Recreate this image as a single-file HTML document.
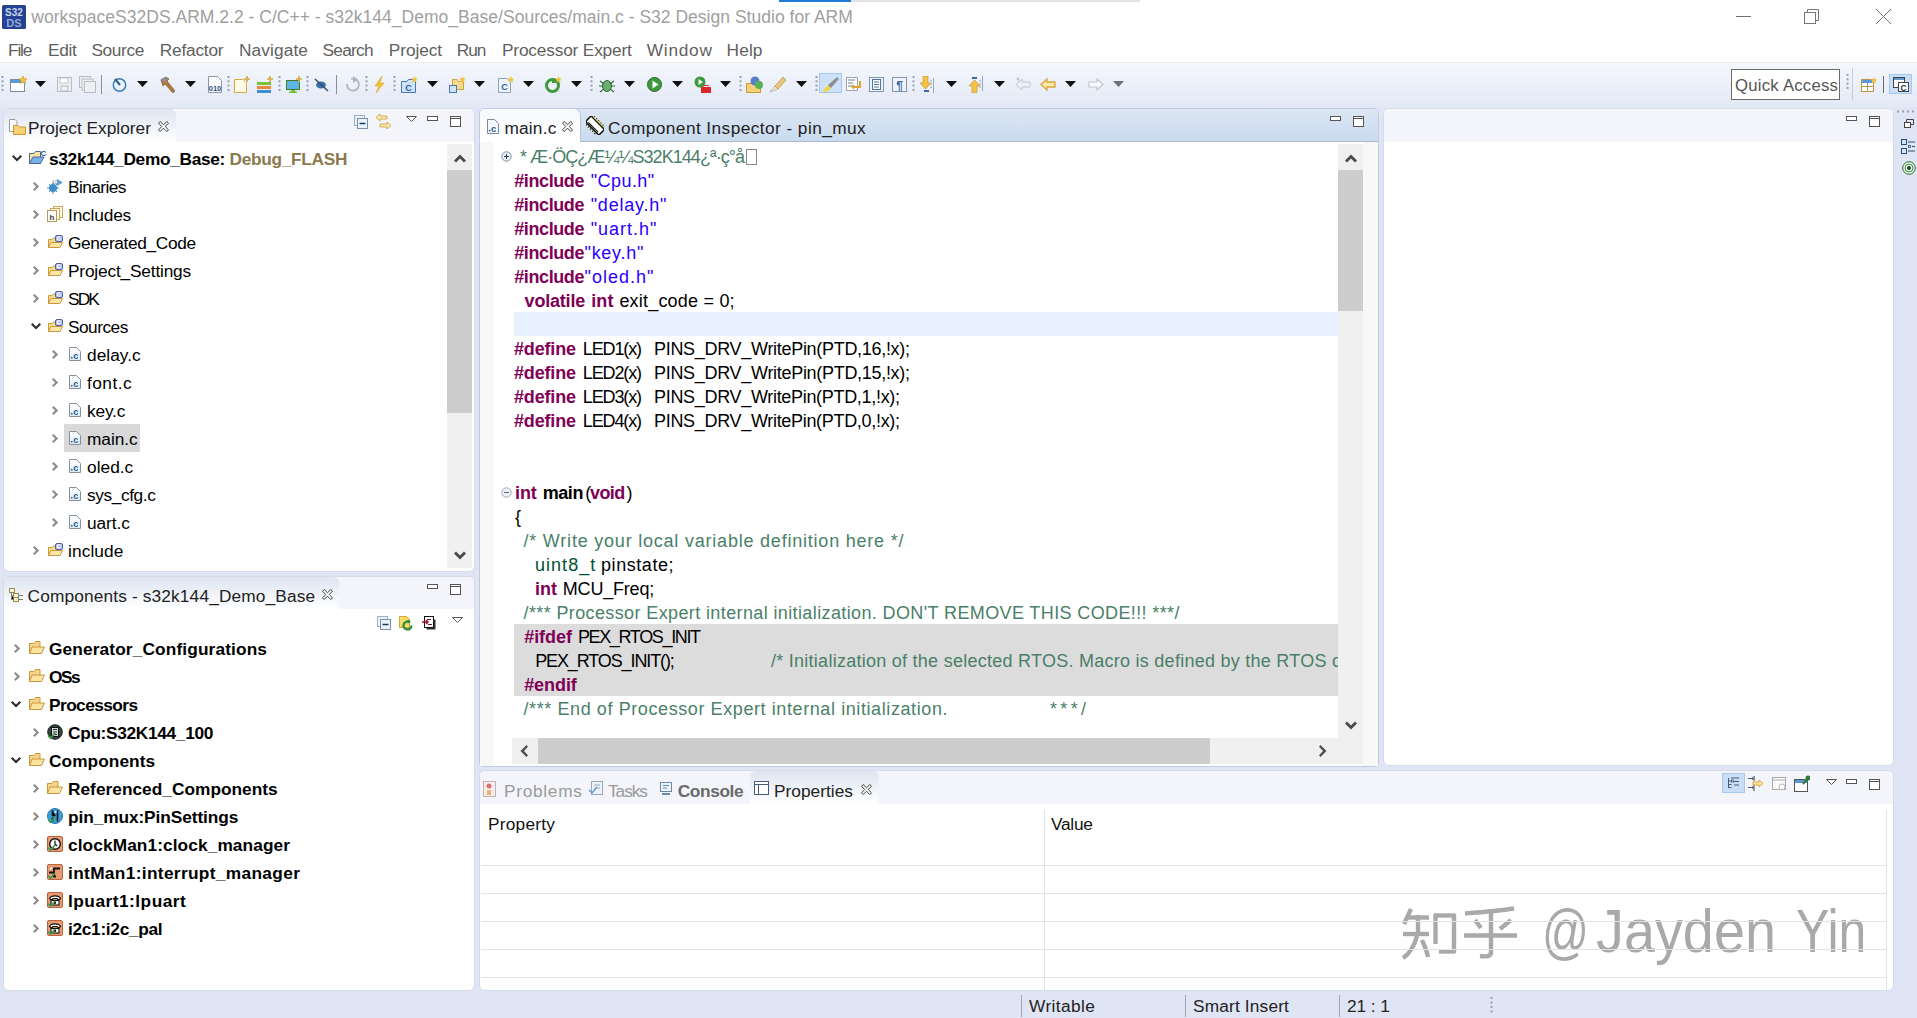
<!DOCTYPE html><html><head><meta charset="utf-8"><style>
html,body{margin:0;padding:0}
body{width:1917px;height:1018px;overflow:hidden;position:relative;background:#dfe5f4;font-family:"Liberation Sans",sans-serif}
.t{position:absolute;white-space:pre;line-height:1.117;}
.i{position:absolute}
</style></head><body>
<div style="position:absolute;left:0px;top:0px;width:1917px;height:62px;background:#fff"></div>
<div style="position:absolute;left:779px;top:0px;width:72px;height:2px;background:#1f7ad8"></div>
<div style="position:absolute;left:851px;top:0px;width:289px;height:2px;background:#e3e3e3"></div>
<svg class="i" style="left:2px;top:5px" width="24" height="24" viewBox="0 0 24 24"><rect x="0" y="0" width="24" height="24" rx="1.5" fill="#24428f"/><text x="12" y="10.5" font-size="10" font-weight="bold" text-anchor="middle" fill="#c9d6f0" font-family="Liberation Sans">S32</text><text x="12" y="21.5" font-size="11" font-weight="bold" text-anchor="middle" fill="#8fa9dc" font-family="Liberation Sans">DS</text></svg>
<div class="t" style="left:31.3px;top:8.43px;font-size:17.5px;color:#a0a0a0;letter-spacing:0.017px;">workspaceS32DS.ARM.2.2 - C/C++ - s32k144_Demo_Base/Sources/main.c - S32 Design Studio for ARM</div>
<div style="position:absolute;left:1736px;top:16px;width:15px;height:1px;background:#707070"></div>
<svg class="i" style="left:1804px;top:9px" width="16" height="16"><rect x="0.5" y="3.5" width="11" height="11" fill="none" stroke="#777"/><path d="M3.5 3.5V0.5H14.5V11.5H11.5" fill="none" stroke="#777"/></svg>
<svg class="i" style="left:1876px;top:9px" width="15" height="15"><path d="M0 0L15 15M15 0L0 15" stroke="#707070" stroke-width="1"/></svg>
<div class="t" style="left:8px;top:40.54px;font-size:17.3px;color:#5f5f5f;letter-spacing:-1.159px;">File</div>
<div class="t" style="left:48px;top:40.54px;font-size:17.3px;color:#5f5f5f;letter-spacing:-0.337px;">Edit</div>
<div class="t" style="left:91.4px;top:40.54px;font-size:17.3px;color:#5f5f5f;letter-spacing:-0.363px;">Source</div>
<div class="t" style="left:159.7px;top:40.54px;font-size:17.3px;color:#5f5f5f;letter-spacing:-0.197px;">Refactor</div>
<div class="t" style="left:239px;top:40.54px;font-size:17.3px;color:#5f5f5f;letter-spacing:0.103px;">Navigate</div>
<div class="t" style="left:322.5px;top:40.54px;font-size:17.3px;color:#5f5f5f;letter-spacing:-0.723px;">Search</div>
<div class="t" style="left:388.8px;top:40.54px;font-size:17.3px;color:#5f5f5f;letter-spacing:-0.074px;">Project</div>
<div class="t" style="left:456.8px;top:40.54px;font-size:17.3px;color:#5f5f5f;letter-spacing:-1.018px;">Run</div>
<div class="t" style="left:502px;top:40.54px;font-size:17.3px;color:#5f5f5f;letter-spacing:-0.179px;">Processor Expert</div>
<div class="t" style="left:646.8px;top:40.54px;font-size:17.3px;color:#5f5f5f;letter-spacing:0.734px;">Window</div>
<div class="t" style="left:726.6px;top:40.54px;font-size:17.3px;color:#5f5f5f;letter-spacing:0.107px;">Help</div>
<div style="position:absolute;left:0px;top:62px;width:1917px;height:1px;background:#ececec"></div>
<div style="position:absolute;left:0px;top:63px;width:1917px;height:45px;background:linear-gradient(#f4f7fc,#e3e8f6)"></div>
<svg class="i" style="left:1px;top:76px;" width="3" height="17" viewBox="0 0 3 17"><rect x="0.5" y="0.0" width="2" height="2" fill="#9aa0aa"/><rect x="0.5" y="4.3" width="2" height="2" fill="#9aa0aa"/><rect x="0.5" y="8.6" width="2" height="2" fill="#9aa0aa"/><rect x="0.5" y="12.9" width="2" height="2" fill="#9aa0aa"/></svg>
<svg class="i" style="left:10px;top:76px;" width="17" height="17" viewBox="0 0 17 17"><rect x="0.5" y="3.5" width="14" height="12" fill="#fff" stroke="#7a8ca8"/><rect x="1" y="4" width="13" height="3" fill="#5b9bd5"/><path d="M13 0l1.2 2.6 2.8.3-2.1 1.9.6 2.8L13 6.2 10.5 7.6l.6-2.8L9 2.9l2.8-.3z" fill="#f5c342" stroke="#b98a1a" stroke-width=".5"/></svg>
<svg class="i" style="left:35px;top:81px;" width="11" height="6" viewBox="0 0 11 6"><path d="M0 0H11L5.5 6Z" fill="#111"/></svg>
<svg class="i" style="left:57px;top:77px;" width="16" height="16" viewBox="0 0 16 16"><rect x="0.5" y="0.5" width="14" height="14" fill="#eef0f3" stroke="#b9bcc2"/><rect x="3" y="1" width="8" height="5" fill="#fff" stroke="#b9bcc2" stroke-width=".8"/><rect x="4" y="9" width="7" height="5" fill="none" stroke="#b9bcc2"/></svg>
<svg class="i" style="left:79px;top:76px;" width="17" height="17" viewBox="0 0 17 17"><rect x="0.5" y="0.5" width="11" height="11" fill="#eef0f3" stroke="#b9bcc2"/><rect x="3" y="3" width="11" height="11" fill="#eef0f3" stroke="#b9bcc2"/><rect x="5.5" y="5.5" width="11" height="11" fill="#eef0f3" stroke="#b9bcc2"/></svg>
<div style="position:absolute;left:101px;top:75px;width:1px;height:19px;background:#8a8f98"></div>
<svg class="i" style="left:112px;top:77px;" width="15" height="15" viewBox="0 0 15 15"><circle cx="7.5" cy="8" r="6.2" fill="#eaf3fb" stroke="#3d7fb6" stroke-width="1.5"/><path d="M3 2l5 6" stroke="#2f5f8a" stroke-width="2"/></svg>
<svg class="i" style="left:137px;top:81px;" width="11" height="6" viewBox="0 0 11 6"><path d="M0 0H11L5.5 6Z" fill="#111"/></svg>
<svg class="i" style="left:159px;top:76px;" width="17" height="17" viewBox="0 0 17 17"><path d="M2 4l5-3 3 2-2 2 8 10-2 2-8-9-2 2z" fill="#b07a3c" stroke="#6d4a24" stroke-width=".6"/><path d="M1 4l5-3 3 2-3 3z" fill="#8a8f99"/></svg>
<svg class="i" style="left:185px;top:81px;" width="11" height="6" viewBox="0 0 11 6"><path d="M0 0H11L5.5 6Z" fill="#111"/></svg>
<svg class="i" style="left:208px;top:76px;" width="14" height="17" viewBox="0 0 14 17"><path d="M0.5 0.5H9.5L13.5 4.5V16.5H0.5Z" fill="#fff" stroke="#8a96a8"/><text x="7" y="15" font-size="7.5" font-weight="bold" text-anchor="middle" fill="#2c4f7c" font-family="Liberation Sans">010</text></svg>
<svg class="i" style="left:227px;top:76px;" width="3" height="17" viewBox="0 0 3 17"><rect x="0.5" y="0.0" width="2" height="2" fill="#9aa0aa"/><rect x="0.5" y="4.3" width="2" height="2" fill="#9aa0aa"/><rect x="0.5" y="8.6" width="2" height="2" fill="#9aa0aa"/><rect x="0.5" y="12.9" width="2" height="2" fill="#9aa0aa"/></svg>
<svg class="i" style="left:234px;top:76px;" width="17" height="17" viewBox="0 0 17 17"><path d="M0.5 3.5H9L12.5 7V16.5H0.5Z" fill="#fffbe6" stroke="#d7a93f"/><path d="M13 0v6M10 3h6" stroke="#d7a93f" stroke-width="1.6"/></svg>
<svg class="i" style="left:257px;top:76px;" width="17" height="17" viewBox="0 0 17 17"><rect x="0" y="6" width="14" height="3" fill="#7cbf3a"/><rect x="0" y="10" width="14" height="3" fill="#e98a3b"/><rect x="0" y="14" width="14" height="3" fill="#3d8fd1"/><path d="M13 0v6M10 3h6" stroke="#d7a93f" stroke-width="1.6"/></svg>
<svg class="i" style="left:278px;top:76px;" width="3" height="17" viewBox="0 0 3 17"><rect x="0.5" y="0.0" width="2" height="2" fill="#9aa0aa"/><rect x="0.5" y="4.3" width="2" height="2" fill="#9aa0aa"/><rect x="0.5" y="8.6" width="2" height="2" fill="#9aa0aa"/><rect x="0.5" y="12.9" width="2" height="2" fill="#9aa0aa"/></svg>
<svg class="i" style="left:286px;top:76px;" width="17" height="17" viewBox="0 0 17 17"><rect x="0.5" y="4.5" width="13" height="9" fill="#5fb4e6" stroke="#3f7c22"/><rect x="5" y="14" width="4" height="2" fill="#7cbf3a"/><rect x="3" y="15.5" width="8" height="1.5" fill="#7cbf3a"/><path d="M13 0v6M10 3h6" stroke="#d7a93f" stroke-width="1.6"/></svg>
<svg class="i" style="left:306px;top:76px;" width="3" height="17" viewBox="0 0 3 17"><rect x="0.5" y="0.0" width="2" height="2" fill="#9aa0aa"/><rect x="0.5" y="4.3" width="2" height="2" fill="#9aa0aa"/><rect x="0.5" y="8.6" width="2" height="2" fill="#9aa0aa"/><rect x="0.5" y="12.9" width="2" height="2" fill="#9aa0aa"/></svg>
<svg class="i" style="left:314px;top:77px;" width="15" height="15" viewBox="0 0 15 15"><ellipse cx="7" cy="8" rx="5" ry="3.5" fill="#3d6fa5"/><path d="M1 2l13 12" stroke="#2f4f7a" stroke-width="1.5"/></svg>
<div style="position:absolute;left:336px;top:75px;width:1px;height:19px;background:#8a8f98"></div>
<svg class="i" style="left:344px;top:76px;" width="17" height="17" viewBox="0 0 17 17"><path d="M3 8a6 6 0 1 0 4-5" fill="none" stroke="#b0b4bb" stroke-width="1.8"/><path d="M9 0v7l5-3.5z" fill="#b0b4bb"/></svg>
<svg class="i" style="left:365px;top:76px;" width="3" height="17" viewBox="0 0 3 17"><rect x="0.5" y="0.0" width="2" height="2" fill="#9aa0aa"/><rect x="0.5" y="4.3" width="2" height="2" fill="#9aa0aa"/><rect x="0.5" y="8.6" width="2" height="2" fill="#9aa0aa"/><rect x="0.5" y="12.9" width="2" height="2" fill="#9aa0aa"/></svg>
<svg class="i" style="left:374px;top:76px;" width="12" height="17" viewBox="0 0 12 17"><path d="M8 0L1 10h4l-3 7 8-10H6z" fill="#f4c42f" stroke="#caa018" stroke-width=".5"/></svg>
<svg class="i" style="left:393px;top:76px;" width="3" height="17" viewBox="0 0 3 17"><rect x="0.5" y="0.0" width="2" height="2" fill="#9aa0aa"/><rect x="0.5" y="4.3" width="2" height="2" fill="#9aa0aa"/><rect x="0.5" y="8.6" width="2" height="2" fill="#9aa0aa"/><rect x="0.5" y="12.9" width="2" height="2" fill="#9aa0aa"/></svg>
<svg class="i" style="left:401px;top:76px;" width="17" height="17" viewBox="0 0 17 17"><path d="M0.5 5.5H6l1.5-2H14.5V16.5H0.5Z" fill="#cfe2f7" stroke="#4a78b5"/><text x="7.5" y="15" font-size="9" font-weight="bold" text-anchor="middle" fill="#2d5fa5" font-family="Liberation Sans">C</text><path d="M13.5 0l1 2.2 2.4.3-1.8 1.6.5 2.4-2.1-1.2-2.1 1.2.5-2.4-1.8-1.6 2.4-.3z" fill="#f5c342"/></svg>
<svg class="i" style="left:427px;top:81px;" width="11" height="6" viewBox="0 0 11 6"><path d="M0 0H11L5.5 6Z" fill="#111"/></svg>
<svg class="i" style="left:449px;top:76px;" width="17" height="17" viewBox="0 0 17 17"><path d="M3.5 3.5H8l1.5 2H14.5V13.5H3.5Z" fill="#f7d98a" stroke="#c9a247"/><rect x="0.5" y="9.5" width="7" height="7" fill="#cfe2f7" stroke="#4a78b5"/><path d="M13.5 0l1 2.2 2.4.3-1.8 1.6.5 2.4-2.1-1.2-2.1 1.2.5-2.4-1.8-1.6 2.4-.3z" fill="#f5c342"/></svg>
<svg class="i" style="left:474px;top:81px;" width="11" height="6" viewBox="0 0 11 6"><path d="M0 0H11L5.5 6Z" fill="#111"/></svg>
<svg class="i" style="left:498px;top:76px;" width="16" height="17" viewBox="0 0 16 17"><path d="M0.5 2.5H9L12.5 6V16.5H0.5Z" fill="#eef4fb" stroke="#8fa2bb"/><text x="6.5" y="14" font-size="9" font-weight="bold" text-anchor="middle" fill="#2d5fa5" font-family="Liberation Sans">C</text><path d="M13 0l1 2.2 2.4.3-1.8 1.6.5 2.4-2.1-1.2-2.1 1.2.5-2.4-1.8-1.6 2.4-.3z" fill="#f5c342"/></svg>
<svg class="i" style="left:523px;top:81px;" width="11" height="6" viewBox="0 0 11 6"><path d="M0 0H11L5.5 6Z" fill="#111"/></svg>
<svg class="i" style="left:545px;top:76px;" width="17" height="17" viewBox="0 0 17 17"><circle cx="7.5" cy="9.5" r="6" fill="none" stroke="#3f9a3a" stroke-width="3"/><path d="M7 6h6v4" fill="none" stroke="#3f9a3a" stroke-width="2"/><path d="M13.5 0l1 2.2 2.4.3-1.8 1.6.5 2.4-2.1-1.2-2.1 1.2.5-2.4-1.8-1.6 2.4-.3z" fill="#f5c342"/></svg>
<svg class="i" style="left:571px;top:81px;" width="11" height="6" viewBox="0 0 11 6"><path d="M0 0H11L5.5 6Z" fill="#111"/></svg>
<svg class="i" style="left:590px;top:76px;" width="3" height="17" viewBox="0 0 3 17"><rect x="0.5" y="0.0" width="2" height="2" fill="#9aa0aa"/><rect x="0.5" y="4.3" width="2" height="2" fill="#9aa0aa"/><rect x="0.5" y="8.6" width="2" height="2" fill="#9aa0aa"/><rect x="0.5" y="12.9" width="2" height="2" fill="#9aa0aa"/></svg>
<svg class="i" style="left:599px;top:76px;" width="16" height="17" viewBox="0 0 16 17"><ellipse cx="8" cy="10" rx="4.5" ry="5.5" fill="#6ab06a" stroke="#2f6e3a"/><path d="M1 5l4 3M15 5l-4 3M0 10h4M12 10h4M1 16l4-3M15 16l-4-3" stroke="#2f6e3a" stroke-width="1.2"/></svg>
<svg class="i" style="left:624px;top:81px;" width="11" height="6" viewBox="0 0 11 6"><path d="M0 0H11L5.5 6Z" fill="#111"/></svg>
<svg class="i" style="left:647px;top:77px;" width="15" height="15" viewBox="0 0 15 15"><circle cx="7.5" cy="7.5" r="7" fill="#3c9a3c" stroke="#2a6f2a"/><path d="M5.5 3.5v8l6-4z" fill="#fff"/></svg>
<svg class="i" style="left:672px;top:81px;" width="11" height="6" viewBox="0 0 11 6"><path d="M0 0H11L5.5 6Z" fill="#111"/></svg>
<svg class="i" style="left:694px;top:76px;" width="17" height="17" viewBox="0 0 17 17"><circle cx="6" cy="6" r="5.5" fill="#3c9a3c"/><path d="M4.5 3v6l4.5-3z" fill="#fff"/><rect x="7" y="11" width="10" height="6" fill="#d9262b"/><rect x="10" y="9.5" width="4" height="2" fill="none" stroke="#d9262b"/></svg>
<svg class="i" style="left:720px;top:81px;" width="11" height="6" viewBox="0 0 11 6"><path d="M0 0H11L5.5 6Z" fill="#111"/></svg>
<svg class="i" style="left:739px;top:76px;" width="3" height="17" viewBox="0 0 3 17"><rect x="0.5" y="0.0" width="2" height="2" fill="#9aa0aa"/><rect x="0.5" y="4.3" width="2" height="2" fill="#9aa0aa"/><rect x="0.5" y="8.6" width="2" height="2" fill="#9aa0aa"/><rect x="0.5" y="12.9" width="2" height="2" fill="#9aa0aa"/></svg>
<svg class="i" style="left:746px;top:76px;" width="18" height="17" viewBox="0 0 18 17"><path d="M0.5 7.5H6l1.5-2H14.5V16.5H0.5Z" fill="#f7d07a" stroke="#c9973a"/><circle cx="9" cy="5" r="4.5" fill="#5a7fc9"/><circle cx="13" cy="9" r="4" fill="#58b058"/></svg>
<svg class="i" style="left:769px;top:76px;" width="18" height="17" viewBox="0 0 18 17"><path d="M1 16l5-6 3 3z" fill="#f1e6c8" stroke="#999" stroke-width=".6"/><path d="M6 10l8-9 3 3-8 9z" fill="#e7c67c" stroke="#b08a3a" stroke-width=".6"/></svg>
<svg class="i" style="left:796px;top:81px;" width="11" height="6" viewBox="0 0 11 6"><path d="M0 0H11L5.5 6Z" fill="#111"/></svg>
<svg class="i" style="left:815px;top:76px;" width="3" height="17" viewBox="0 0 3 17"><rect x="0.5" y="0.0" width="2" height="2" fill="#9aa0aa"/><rect x="0.5" y="4.3" width="2" height="2" fill="#9aa0aa"/><rect x="0.5" y="8.6" width="2" height="2" fill="#9aa0aa"/><rect x="0.5" y="12.9" width="2" height="2" fill="#9aa0aa"/></svg>
<div style="position:absolute;left:819px;top:73px;width:23px;height:20px;background:#cde1f9;border:1px solid #a6c7ee;box-sizing:border-box"></div>
<svg class="i" style="left:822px;top:76px;" width="17" height="17" viewBox="0 0 17 17"><path d="M1 16c2 0 6-1 8-4l-3-3c-2 2-4 5-5 7z" fill="#f5d23c"/><path d="M6 9l9-8 2 2-8 9z" fill="#8e8e8e"/></svg>
<svg class="i" style="left:846px;top:76px;" width="16" height="17" viewBox="0 0 16 17"><rect x="0.5" y="1.5" width="11" height="13" fill="#fff" stroke="#9aa6b5"/><path d="M2 4h7M2 7h5M2 10h5" stroke="#6f7f95"/><path d="M14 5v6H8" fill="none" stroke="#e0a530" stroke-width="2"/><path d="M8 8v6l-3-3z" fill="#e0a530"/></svg>
<svg class="i" style="left:869px;top:77px;" width="15" height="15" viewBox="0 0 15 15"><rect x="0.5" y="0.5" width="14" height="14" fill="#eef3fa" stroke="#8496ad"/><rect x="3.5" y="2.5" width="8" height="10" fill="#fff" stroke="#4d73a8"/><path d="M5 5h5M5 7.5h5M5 10h5" stroke="#4d73a8"/></svg>
<svg class="i" style="left:892px;top:77px;" width="15" height="15" viewBox="0 0 15 15"><rect x="0.5" y="0.5" width="14" height="14" fill="#eef3fa" stroke="#8496ad"/><text x="7.5" y="12.5" font-size="12" font-weight="bold" text-anchor="middle" fill="#3d6aa5" font-family="Liberation Sans">¶</text></svg>
<svg class="i" style="left:912px;top:76px;" width="3" height="17" viewBox="0 0 3 17"><rect x="0.5" y="0.0" width="2" height="2" fill="#9aa0aa"/><rect x="0.5" y="4.3" width="2" height="2" fill="#9aa0aa"/><rect x="0.5" y="8.6" width="2" height="2" fill="#9aa0aa"/><rect x="0.5" y="12.9" width="2" height="2" fill="#9aa0aa"/></svg>
<svg class="i" style="left:919px;top:76px;" width="16" height="17" viewBox="0 0 16 17"><path d="M4 0h5v7h3l-5.5 6L1 7h3z" fill="#f5c342" stroke="#c9973a" stroke-width=".7"/><path d="M14.5 2v15M11 5h2M11 8h2M11 11h2" stroke="#9aa6b5"/><rect x="5" y="14" width="5" height="2" fill="#3d6aa5"/></svg>
<svg class="i" style="left:946px;top:81px;" width="11" height="6" viewBox="0 0 11 6"><path d="M0 0H11L5.5 6Z" fill="#111"/></svg>
<svg class="i" style="left:968px;top:76px;" width="16" height="17" viewBox="0 0 16 17"><path d="M4 17h5v-7h3L6.5 4 1 10h3z" fill="#f5c342" stroke="#c9973a" stroke-width=".7"/><path d="M14.5 0v15M11 5h2M11 8h2M11 11h2" stroke="#9aa6b5"/><rect x="4" y="1" width="5" height="2" fill="#3d6aa5"/></svg>
<svg class="i" style="left:994px;top:81px;" width="11" height="6" viewBox="0 0 11 6"><path d="M0 0H11L5.5 6Z" fill="#111"/></svg>
<svg class="i" style="left:1015px;top:77px;" width="16" height="15" viewBox="0 0 16 15"><path d="M1 7.5L7 2v3h8v5H7v3z" fill="#eceff3" stroke="#c2c6cc"/><circle cx="3" cy="2" r="1.5" fill="#c2c6cc"/></svg>
<svg class="i" style="left:1040px;top:77px;" width="16" height="15" viewBox="0 0 16 15"><path d="M1 7.5L7 2v3h8v5H7v3z" fill="#fde9a8" stroke="#d9a53a" stroke-width="1.3"/></svg>
<svg class="i" style="left:1065px;top:81px;" width="11" height="6" viewBox="0 0 11 6"><path d="M0 0H11L5.5 6Z" fill="#111"/></svg>
<svg class="i" style="left:1088px;top:77px;" width="16" height="15" viewBox="0 0 16 15"><path d="M15 7.5L9 2v3H1v5h8v3z" fill="#fafbfc" stroke="#c2c6cc" stroke-width="1.2"/></svg>
<svg class="i" style="left:1113px;top:81px;" width="11" height="6" viewBox="0 0 11 6"><path d="M0 0H11L5.5 6Z" fill="#6d7079"/></svg>
<div style="position:absolute;left:1731px;top:69px;width:109px;height:31px;background:#fff;border:1px solid #6b6b6b;box-sizing:border-box"></div>
<div class="t" style="left:1735px;top:77.07px;font-size:16.7px;color:#555;letter-spacing:0.252px;">Quick Access</div>
<svg class="i" style="left:1846px;top:74px;" width="3" height="17" viewBox="0 0 3 17"><rect x="0.5" y="0.0" width="2" height="2" fill="#9aa0aa"/><rect x="0.5" y="4.3" width="2" height="2" fill="#9aa0aa"/><rect x="0.5" y="8.6" width="2" height="2" fill="#9aa0aa"/><rect x="0.5" y="12.9" width="2" height="2" fill="#9aa0aa"/></svg>
<div style="position:absolute;left:1852px;top:68px;width:1px;height:32px;background:#c6ccd6"></div>
<svg class="i" style="left:1861px;top:77px;" width="17" height="15" viewBox="0 0 17 15"><rect x="0.5" y="2.5" width="12" height="12" fill="#fff" stroke="#b8954a"/><rect x="1" y="3" width="11" height="3" fill="#5b9bd5"/><path d="M1 9.5h11M6.5 6v9" stroke="#b8954a"/><path d="M13 0l1 2.2 2.4.3-1.8 1.6.5 2.4-2.1-1.2-2.1 1.2.5-2.4-1.8-1.6 2.4-.3z" fill="#f5c342"/></svg>
<div style="position:absolute;left:1883px;top:76px;width:1px;height:17px;background:#6b6b6b"></div>
<div style="position:absolute;left:1889px;top:74px;width:23px;height:20px;background:#c9def7;border:1px solid #a9c8ef;box-sizing:border-box"></div>
<svg class="i" style="left:1893px;top:77px;" width="16" height="15" viewBox="0 0 16 15"><rect x="0.5" y="0.5" width="11" height="10" fill="#fff" stroke="#444"/><rect x="1" y="1" width="10" height="2" fill="#5b9bd5"/><rect x="5.5" y="5.5" width="10" height="9" fill="#fff" stroke="#444"/><text x="10.5" y="13.5" font-size="8.5" font-weight="bold" text-anchor="middle" fill="#234" font-family="Liberation Sans">C</text></svg>
<div style="position:absolute;left:3px;top:108px;width:472px;height:464px;background:#fff;border:1px solid #d5dbe9;box-sizing:border-box;border-radius:6px"></div>
<div style="position:absolute;left:4px;top:109px;width:470px;height:33px;background:#f4f5fa;border-radius:5px 5px 0 0"></div>
<div style="position:absolute;left:4px;top:109px;width:172px;height:33px;background:linear-gradient(#dde5f1,#ffffff);border-radius:5px 6px 0 0"></div>
<svg class="i" style="left:9px;top:119px;" width="17" height="16" viewBox="0 0 17 16"><path d="M0.5 0.5H6L8 2.5V12.5H0.5Z" fill="#fff" stroke="#9a9a9a"/><path d="M4.5 6.5H9l1.5 1.5H16.5V15.5H4.5Z" fill="#f7d274" stroke="#c9973a"/></svg>
<div class="t" style="left:28px;top:118.54px;font-size:17.3px;color:#222;">Project Explorer</div>
<svg class="i" style="left:158px;top:121px;" width="11" height="11" viewBox="0 0 11 11"><path d="M2.2 0.5L5.5 3.8L8.8 0.5L10.5 2.2L7.2 5.5L10.5 8.8L8.8 10.5L5.5 7.2L2.2 10.5L0.5 8.8L3.8 5.5L0.5 2.2Z" fill="#fff" stroke="#3c3c3c" stroke-width="1"/></svg>
<svg class="i" style="left:354px;top:115px;" width="14" height="14" viewBox="0 0 14 14"><rect x="0.5" y="0.5" width="10" height="10" fill="#e8f3fb" stroke="#9fb0c4"/><rect x="3.5" y="3.5" width="10" height="10" fill="#e8f3fb" stroke="#7d8fa6"/><path d="M5.5 8.5h6" stroke="#1e3a5f" stroke-width="1.5"/></svg>
<svg class="i" style="left:375px;top:113px;" width="17" height="17" viewBox="0 0 17 17"><path d="M1 4.5L5 1v2h7v3H5v2z" fill="#fbe8a6" stroke="#c9a042" stroke-width=".8"/><path d="M16 12.5L12 9v2H5v3h7v2z" fill="#fbe8a6" stroke="#c9a042" stroke-width=".8"/></svg>
<svg class="i" style="left:406px;top:116px;" width="11" height="6" viewBox="0 0 11 6"><path d="M0.5 0.5H10.5L5.5 5.5Z" fill="#fff" stroke="#555"/></svg>
<svg class="i" style="left:427px;top:116px;" width="11" height="5" viewBox="0 0 11 5"><rect x="0.5" y="0.5" width="10" height="4" fill="#fff" stroke="#555"/></svg>
<svg class="i" style="left:450px;top:116px;" width="11" height="11" viewBox="0 0 11 11"><rect x="0.5" y="0.5" width="10" height="10" fill="#fff" stroke="#555"/><path d="M0.5 2.5h10" stroke="#555"/></svg>
<div style="position:absolute;left:447px;top:144px;width:25px;height:424px;background:#f0f0f0"></div>
<div style="position:absolute;left:447px;top:170px;width:25px;height:243px;background:#cdcdcd"></div>
<svg class="i" style="left:453.5px;top:154px;" width="12" height="9" viewBox="0 0 12 9"><path d="M0 6.5L6 0.5L12 6.5L10 8.5L6 4.5L2 8.5Z" fill="#4a4a4a"/></svg>
<svg class="i" style="left:453.5px;top:551px;" width="12" height="9" viewBox="0 0 12 9"><path d="M0 2.5L6 8.5L12 2.5L10 0.5L6 4.5L2 0.5Z" fill="#4a4a4a"/></svg>
<svg class="i" style="left:12px;top:155.0px;" width="10" height="7" viewBox="0 0 10 7"><path d="M0 1.6L1.5 0L5 3.4L8.5 0L10 1.6L5 6.5Z" fill="#2f2f2f"/></svg>
<svg class="i" style="left:29px;top:149px;" width="18" height="16" viewBox="0 0 18 16"><path d="M0.5 4.5H5l1.5-2H11.5V14.5H0.5Z" fill="#f9dfa8" stroke="#4a6a9a"/><path d="M0.5 14.5L4 8H15L11.5 14.5Z" fill="#78b0e8" stroke="#4a6a9a"/><text x="14.5" y="7" font-size="8" font-weight="bold" text-anchor="middle" fill="#2d4f8a" font-family="Liberation Sans">C</text></svg>
<div class="t" style="left:49px;top:149.64px;font-size:17.3px;color:#000;letter-spacing:-0.310px;"><span style="font-weight:bold;">s32k144_Demo_Base: </span><span style="color:#8a7a4e;font-weight:bold;">Debug_FLASH</span></div>
<svg class="i" style="left:33px;top:182.0px;" width="7" height="9" viewBox="0 0 7 9"><path d="M0 1.5L1.6 0L6.2 4.5L1.6 9L0 7.5L3 4.5Z" fill="#8f8f8f"/></svg>
<svg class="i" style="left:47px;top:178px;" width="17" height="16" viewBox="0 0 17 16"><circle cx="6" cy="10" r="4" fill="#3d8fc9"/><path d="M0 10h12M6 4v12M2 6l8 8M10 6l-8 8" stroke="#3d8fc9" stroke-width="1"/><path d="M10 1v7l6-3.5z" fill="#5aa0d6"/><text x="5" y="6" font-size="5" fill="#888" font-family="Liberation Sans">10</text></svg>
<div class="t" style="left:68px;top:177.64px;font-size:17.3px;color:#000;letter-spacing:-0.586px;">Binaries</div>
<svg class="i" style="left:33px;top:210.0px;" width="7" height="9" viewBox="0 0 7 9"><path d="M0 1.5L1.6 0L6.2 4.5L1.6 9L0 7.5L3 4.5Z" fill="#8f8f8f"/></svg>
<svg class="i" style="left:47px;top:206px;" width="17" height="16" viewBox="0 0 17 16"><rect x="6.5" y="0.5" width="9" height="11" fill="#fff8e6" stroke="#c9a95a"/><rect x="3.5" y="2.5" width="9" height="11" fill="#fff8e6" stroke="#c9a95a"/><rect x="0.5" y="4.5" width="9" height="11" fill="#fff" stroke="#b59a58"/><text x="5" y="14" font-size="8" font-weight="bold" text-anchor="middle" fill="#333" font-family="Liberation Sans">h</text></svg>
<div class="t" style="left:68px;top:205.64px;font-size:17.3px;color:#000;letter-spacing:-0.162px;">Includes</div>
<svg class="i" style="left:33px;top:238.0px;" width="7" height="9" viewBox="0 0 7 9"><path d="M0 1.5L1.6 0L6.2 4.5L1.6 9L0 7.5L3 4.5Z" fill="#8f8f8f"/></svg>
<svg class="i" style="left:48px;top:235px;" width="16" height="14" viewBox="0 0 16 14"><path d="M0.5 4.5H4l1.5-1.5H9V12.5H0.5Z" fill="#f9d88a" stroke="#c9973a"/><path d="M0.5 12.5L3 7.5H14.5L12 12.5Z" fill="#fde7a8" stroke="#c9973a"/><rect x="7.5" y="0.5" width="7" height="6" rx="1.5" fill="#b9c9ee" stroke="#4a5fae"/><path d="M12.5 2.2a1.8 1.8 0 1 0 0 2.6" fill="none" stroke="#fff" stroke-width="1"/></svg>
<div class="t" style="left:68px;top:233.64px;font-size:17.3px;color:#000;letter-spacing:-0.349px;">Generated_Code</div>
<svg class="i" style="left:33px;top:266.0px;" width="7" height="9" viewBox="0 0 7 9"><path d="M0 1.5L1.6 0L6.2 4.5L1.6 9L0 7.5L3 4.5Z" fill="#8f8f8f"/></svg>
<svg class="i" style="left:48px;top:263px;" width="16" height="14" viewBox="0 0 16 14"><path d="M0.5 4.5H4l1.5-1.5H9V12.5H0.5Z" fill="#f9d88a" stroke="#c9973a"/><path d="M0.5 12.5L3 7.5H14.5L12 12.5Z" fill="#fde7a8" stroke="#c9973a"/><rect x="7.5" y="0.5" width="7" height="6" rx="1.5" fill="#b9c9ee" stroke="#4a5fae"/><path d="M12.5 2.2a1.8 1.8 0 1 0 0 2.6" fill="none" stroke="#fff" stroke-width="1"/></svg>
<div class="t" style="left:68px;top:261.64px;font-size:17.3px;color:#000;letter-spacing:-0.178px;">Project_Settings</div>
<svg class="i" style="left:33px;top:294.0px;" width="7" height="9" viewBox="0 0 7 9"><path d="M0 1.5L1.6 0L6.2 4.5L1.6 9L0 7.5L3 4.5Z" fill="#8f8f8f"/></svg>
<svg class="i" style="left:48px;top:291px;" width="16" height="14" viewBox="0 0 16 14"><path d="M0.5 4.5H4l1.5-1.5H9V12.5H0.5Z" fill="#f9d88a" stroke="#c9973a"/><path d="M0.5 12.5L3 7.5H14.5L12 12.5Z" fill="#fde7a8" stroke="#c9973a"/><rect x="7.5" y="0.5" width="7" height="6" rx="1.5" fill="#b9c9ee" stroke="#4a5fae"/><path d="M12.5 2.2a1.8 1.8 0 1 0 0 2.6" fill="none" stroke="#fff" stroke-width="1"/></svg>
<div class="t" style="left:68px;top:289.64px;font-size:17.3px;color:#000;letter-spacing:-1.836px;">SDK</div>
<svg class="i" style="left:31px;top:323.0px;" width="10" height="7" viewBox="0 0 10 7"><path d="M0 1.6L1.5 0L5 3.4L8.5 0L10 1.6L5 6.5Z" fill="#2f2f2f"/></svg>
<svg class="i" style="left:48px;top:319px;" width="16" height="14" viewBox="0 0 16 14"><path d="M0.5 4.5H4l1.5-1.5H9V12.5H0.5Z" fill="#f9d88a" stroke="#c9973a"/><path d="M0.5 12.5L3 7.5H14.5L12 12.5Z" fill="#fde7a8" stroke="#c9973a"/><rect x="7.5" y="0.5" width="7" height="6" rx="1.5" fill="#b9c9ee" stroke="#4a5fae"/><path d="M12.5 2.2a1.8 1.8 0 1 0 0 2.6" fill="none" stroke="#fff" stroke-width="1"/></svg>
<div class="t" style="left:68px;top:317.64px;font-size:17.3px;color:#000;letter-spacing:-0.511px;">Sources</div>
<svg class="i" style="left:52px;top:350.0px;" width="7" height="9" viewBox="0 0 7 9"><path d="M0 1.5L1.6 0L6.2 4.5L1.6 9L0 7.5L3 4.5Z" fill="#8f8f8f"/></svg>
<svg class="i" style="left:69px;top:347px;" width="12" height="14" viewBox="0 0 12 14"><defs><linearGradient id="cfg125" x1="0" y1="0" x2="0" y2="1"><stop offset="0" stop-color="#fff"/><stop offset="1" stop-color="#dcecf8"/></linearGradient></defs><path d="M0.5 0.5H7.5L11.5 4.5V13.5H0.5Z" fill="url(#cfg125)" stroke="#8a8f96"/><text x="6.8" y="11.5" font-size="9" font-weight="bold" text-anchor="middle" fill="#1f5a8f" font-family="Liberation Sans">c</text><rect x="2" y="10" width="1.5" height="1.5" fill="#1f5a8f"/></svg>
<div class="t" style="left:87px;top:345.64px;font-size:17.3px;color:#000;letter-spacing:0.028px;">delay.c</div>
<svg class="i" style="left:52px;top:378.0px;" width="7" height="9" viewBox="0 0 7 9"><path d="M0 1.5L1.6 0L6.2 4.5L1.6 9L0 7.5L3 4.5Z" fill="#8f8f8f"/></svg>
<svg class="i" style="left:69px;top:375px;" width="12" height="14" viewBox="0 0 12 14"><defs><linearGradient id="cfg128" x1="0" y1="0" x2="0" y2="1"><stop offset="0" stop-color="#fff"/><stop offset="1" stop-color="#dcecf8"/></linearGradient></defs><path d="M0.5 0.5H7.5L11.5 4.5V13.5H0.5Z" fill="url(#cfg128)" stroke="#8a8f96"/><text x="6.8" y="11.5" font-size="9" font-weight="bold" text-anchor="middle" fill="#1f5a8f" font-family="Liberation Sans">c</text><rect x="2" y="10" width="1.5" height="1.5" fill="#1f5a8f"/></svg>
<div class="t" style="left:87px;top:373.64px;font-size:17.3px;color:#000;letter-spacing:0.478px;">font.c</div>
<svg class="i" style="left:52px;top:406.0px;" width="7" height="9" viewBox="0 0 7 9"><path d="M0 1.5L1.6 0L6.2 4.5L1.6 9L0 7.5L3 4.5Z" fill="#8f8f8f"/></svg>
<svg class="i" style="left:69px;top:403px;" width="12" height="14" viewBox="0 0 12 14"><defs><linearGradient id="cfg131" x1="0" y1="0" x2="0" y2="1"><stop offset="0" stop-color="#fff"/><stop offset="1" stop-color="#dcecf8"/></linearGradient></defs><path d="M0.5 0.5H7.5L11.5 4.5V13.5H0.5Z" fill="url(#cfg131)" stroke="#8a8f96"/><text x="6.8" y="11.5" font-size="9" font-weight="bold" text-anchor="middle" fill="#1f5a8f" font-family="Liberation Sans">c</text><rect x="2" y="10" width="1.5" height="1.5" fill="#1f5a8f"/></svg>
<div class="t" style="left:87px;top:401.64px;font-size:17.3px;color:#000;letter-spacing:-0.173px;">key.c</div>
<div style="position:absolute;left:64px;top:424px;width:76px;height:28px;background:#d9d9d9"></div>
<svg class="i" style="left:52px;top:434.0px;" width="7" height="9" viewBox="0 0 7 9"><path d="M0 1.5L1.6 0L6.2 4.5L1.6 9L0 7.5L3 4.5Z" fill="#8f8f8f"/></svg>
<svg class="i" style="left:69px;top:431px;" width="12" height="14" viewBox="0 0 12 14"><defs><linearGradient id="cfg135" x1="0" y1="0" x2="0" y2="1"><stop offset="0" stop-color="#fff"/><stop offset="1" stop-color="#dcecf8"/></linearGradient></defs><path d="M0.5 0.5H7.5L11.5 4.5V13.5H0.5Z" fill="url(#cfg135)" stroke="#8a8f96"/><text x="6.8" y="11.5" font-size="9" font-weight="bold" text-anchor="middle" fill="#1f5a8f" font-family="Liberation Sans">c</text><rect x="2" y="10" width="1.5" height="1.5" fill="#1f5a8f"/></svg>
<div class="t" style="left:87px;top:429.64px;font-size:17.3px;color:#000;letter-spacing:-0.031px;">main.c</div>
<svg class="i" style="left:52px;top:462.0px;" width="7" height="9" viewBox="0 0 7 9"><path d="M0 1.5L1.6 0L6.2 4.5L1.6 9L0 7.5L3 4.5Z" fill="#8f8f8f"/></svg>
<svg class="i" style="left:69px;top:459px;" width="12" height="14" viewBox="0 0 12 14"><defs><linearGradient id="cfg138" x1="0" y1="0" x2="0" y2="1"><stop offset="0" stop-color="#fff"/><stop offset="1" stop-color="#dcecf8"/></linearGradient></defs><path d="M0.5 0.5H7.5L11.5 4.5V13.5H0.5Z" fill="url(#cfg138)" stroke="#8a8f96"/><text x="6.8" y="11.5" font-size="9" font-weight="bold" text-anchor="middle" fill="#1f5a8f" font-family="Liberation Sans">c</text><rect x="2" y="10" width="1.5" height="1.5" fill="#1f5a8f"/></svg>
<div class="t" style="left:87px;top:457.64px;font-size:17.3px;color:#000;letter-spacing:0.027px;">oled.c</div>
<svg class="i" style="left:52px;top:490.0px;" width="7" height="9" viewBox="0 0 7 9"><path d="M0 1.5L1.6 0L6.2 4.5L1.6 9L0 7.5L3 4.5Z" fill="#8f8f8f"/></svg>
<svg class="i" style="left:69px;top:487px;" width="12" height="14" viewBox="0 0 12 14"><defs><linearGradient id="cfg141" x1="0" y1="0" x2="0" y2="1"><stop offset="0" stop-color="#fff"/><stop offset="1" stop-color="#dcecf8"/></linearGradient></defs><path d="M0.5 0.5H7.5L11.5 4.5V13.5H0.5Z" fill="url(#cfg141)" stroke="#8a8f96"/><text x="6.8" y="11.5" font-size="9" font-weight="bold" text-anchor="middle" fill="#1f5a8f" font-family="Liberation Sans">c</text><rect x="2" y="10" width="1.5" height="1.5" fill="#1f5a8f"/></svg>
<div class="t" style="left:87px;top:485.64px;font-size:17.3px;color:#000;letter-spacing:-0.401px;">sys_cfg.c</div>
<svg class="i" style="left:52px;top:518.0px;" width="7" height="9" viewBox="0 0 7 9"><path d="M0 1.5L1.6 0L6.2 4.5L1.6 9L0 7.5L3 4.5Z" fill="#8f8f8f"/></svg>
<svg class="i" style="left:69px;top:515px;" width="12" height="14" viewBox="0 0 12 14"><defs><linearGradient id="cfg144" x1="0" y1="0" x2="0" y2="1"><stop offset="0" stop-color="#fff"/><stop offset="1" stop-color="#dcecf8"/></linearGradient></defs><path d="M0.5 0.5H7.5L11.5 4.5V13.5H0.5Z" fill="url(#cfg144)" stroke="#8a8f96"/><text x="6.8" y="11.5" font-size="9" font-weight="bold" text-anchor="middle" fill="#1f5a8f" font-family="Liberation Sans">c</text><rect x="2" y="10" width="1.5" height="1.5" fill="#1f5a8f"/></svg>
<div class="t" style="left:87px;top:513.64px;font-size:17.3px;color:#000;letter-spacing:-0.073px;">uart.c</div>
<svg class="i" style="left:33px;top:546.0px;" width="7" height="9" viewBox="0 0 7 9"><path d="M0 1.5L1.6 0L6.2 4.5L1.6 9L0 7.5L3 4.5Z" fill="#8f8f8f"/></svg>
<svg class="i" style="left:48px;top:543px;" width="16" height="14" viewBox="0 0 16 14"><path d="M0.5 4.5H4l1.5-1.5H9V12.5H0.5Z" fill="#f9d88a" stroke="#c9973a"/><path d="M0.5 12.5L3 7.5H14.5L12 12.5Z" fill="#fde7a8" stroke="#c9973a"/><rect x="7.5" y="0.5" width="7" height="6" rx="1.5" fill="#b9c9ee" stroke="#4a5fae"/><path d="M12.5 2.2a1.8 1.8 0 1 0 0 2.6" fill="none" stroke="#fff" stroke-width="1"/></svg>
<div class="t" style="left:68px;top:541.64px;font-size:17.3px;color:#000;letter-spacing:0.096px;">include</div>
<div style="position:absolute;left:3px;top:576px;width:472px;height:415px;background:#fff;border:1px solid #d5dbe9;box-sizing:border-box;border-radius:6px"></div>
<div style="position:absolute;left:4px;top:577px;width:470px;height:32px;background:#f4f5fa;border-radius:5px 5px 0 0"></div>
<div style="position:absolute;left:4px;top:577px;width:335px;height:32px;background:linear-gradient(#dde5f1,#ffffff);border-radius:5px 6px 0 0"></div>
<svg class="i" style="left:9px;top:588px;" width="17" height="14" viewBox="0 0 17 14"><rect x="0.5" y="0.5" width="5" height="4" fill="#fff3c9" stroke="#9a8a55"/><rect x="4.5" y="5.5" width="5" height="4" fill="#fff3c9" stroke="#9a8a55"/><rect x="4.5" y="9.5" width="5" height="4" fill="#fff3c9" stroke="#9a8a55"/><path d="M2.5 4.5v7h2M10 7.5h4M10 11.5h4" stroke="#7a7a7a"/></svg>
<div class="t" style="left:27.5px;top:586.74px;font-size:17.3px;color:#222;letter-spacing:0.148px;">Components - s32k144_Demo_Base</div>
<svg class="i" style="left:322px;top:589px;" width="11" height="11" viewBox="0 0 11 11"><path d="M2.2 0.5L5.5 3.8L8.8 0.5L10.5 2.2L7.2 5.5L10.5 8.8L8.8 10.5L5.5 7.2L2.2 10.5L0.5 8.8L3.8 5.5L0.5 2.2Z" fill="#fff" stroke="#3c3c3c" stroke-width="1"/></svg>
<svg class="i" style="left:427px;top:584px;" width="11" height="5" viewBox="0 0 11 5"><rect x="0.5" y="0.5" width="10" height="4" fill="#fff" stroke="#555"/></svg>
<svg class="i" style="left:450px;top:584px;" width="11" height="11" viewBox="0 0 11 11"><rect x="0.5" y="0.5" width="10" height="10" fill="#fff" stroke="#555"/><path d="M0.5 2.5h10" stroke="#555"/></svg>
<svg class="i" style="left:377px;top:616px;" width="14" height="14" viewBox="0 0 14 14"><rect x="0.5" y="0.5" width="10" height="10" fill="#e8f3fb" stroke="#9fb0c4"/><rect x="3.5" y="3.5" width="10" height="10" fill="#e8f3fb" stroke="#7d8fa6"/><path d="M5.5 8.5h6" stroke="#1e3a5f" stroke-width="1.5"/></svg>
<svg class="i" style="left:399px;top:616px;" width="15" height="15" viewBox="0 0 15 15"><path d="M0.5 0.5h7l3 3v8h-10z" fill="#f7dc6a" stroke="#d0a830"/><path d="M12.5 9.5a4 4 0 1 1-2-3.5" fill="none" stroke="#2e8a3a" stroke-width="2.2"/><path d="M9 3.5l3 2.5-3.5 1.5z" fill="#2e8a3a"/></svg>
<svg class="i" style="left:422px;top:616px;" width="14" height="14" viewBox="0 0 14 14"><rect x="4.5" y="3.5" width="9" height="10" fill="#333"/><rect x="2.5" y="0.5" width="9" height="11" fill="#fff" stroke="#111"/><path d="M0 6h6M4 4l2 2-2 2" stroke="#a0102a" stroke-width="1.4" fill="none"/><path d="M5 3.5h4M6 8.5h4" stroke="#7a1030"/></svg>
<svg class="i" style="left:452px;top:617px;" width="11" height="6" viewBox="0 0 11 6"><path d="M0.5 0.5H10.5L5.5 5.5Z" fill="#fff" stroke="#555"/></svg>
<svg class="i" style="left:14px;top:644.0px;" width="7" height="9" viewBox="0 0 7 9"><path d="M0 1.5L1.6 0L6.2 4.5L1.6 9L0 7.5L3 4.5Z" fill="#8f8f8f"/></svg>
<svg class="i" style="left:29px;top:640px;" width="17" height="15" viewBox="0 0 17 15"><path d="M0.5 3.5H5l1.5-2H11V13.5H0.5Z" fill="#f6d48a" stroke="#c9973a"/><path d="M0.5 13.5L3 7H15.5L12.5 13.5Z" fill="#fbe3a2" stroke="#c9973a"/></svg>
<div class="t" style="left:49px;top:639.64px;font-size:17.3px;color:#000;font-weight:bold;letter-spacing:0.126px;">Generator_Configurations</div>
<svg class="i" style="left:14px;top:672.0px;" width="7" height="9" viewBox="0 0 7 9"><path d="M0 1.5L1.6 0L6.2 4.5L1.6 9L0 7.5L3 4.5Z" fill="#8f8f8f"/></svg>
<svg class="i" style="left:29px;top:668px;" width="17" height="15" viewBox="0 0 17 15"><path d="M0.5 3.5H5l1.5-2H11V13.5H0.5Z" fill="#f6d48a" stroke="#c9973a"/><path d="M0.5 13.5L3 7H15.5L12.5 13.5Z" fill="#fbe3a2" stroke="#c9973a"/></svg>
<div class="t" style="left:49px;top:667.64px;font-size:17.3px;color:#000;font-weight:bold;letter-spacing:-1.509px;">OSs</div>
<svg class="i" style="left:11px;top:701.0px;" width="10" height="7" viewBox="0 0 10 7"><path d="M0 1.6L1.5 0L5 3.4L8.5 0L10 1.6L5 6.5Z" fill="#2f2f2f"/></svg>
<svg class="i" style="left:29px;top:696px;" width="17" height="15" viewBox="0 0 17 15"><path d="M0.5 3.5H5l1.5-2H11V13.5H0.5Z" fill="#f6d48a" stroke="#c9973a"/><path d="M0.5 13.5L3 7H15.5L12.5 13.5Z" fill="#fbe3a2" stroke="#c9973a"/></svg>
<div class="t" style="left:49px;top:695.64px;font-size:17.3px;color:#000;font-weight:bold;letter-spacing:-0.561px;">Processors</div>
<svg class="i" style="left:33px;top:728.0px;" width="7" height="9" viewBox="0 0 7 9"><path d="M0 1.5L1.6 0L6.2 4.5L1.6 9L0 7.5L3 4.5Z" fill="#8f8f8f"/></svg>
<svg class="i" style="left:47px;top:724px;" width="16" height="16" viewBox="0 0 16 16"><circle cx="8" cy="8" r="7.3" fill="#34433f" stroke="#1d2724"/><rect x="4.5" y="3.5" width="7" height="9" fill="#cfd8d4" stroke="#111"/><path d="M6 5.5h4M6 8h4M6 10.5h4" stroke="#333"/><path d="M1 11.5l2.5 2.8L8 9" fill="none" stroke="#3d9a4a" stroke-width="1.6"/></svg>
<div class="t" style="left:68px;top:723.64px;font-size:17.3px;color:#000;font-weight:bold;letter-spacing:-0.323px;">Cpu:S32K144_100</div>
<svg class="i" style="left:11px;top:757.0px;" width="10" height="7" viewBox="0 0 10 7"><path d="M0 1.6L1.5 0L5 3.4L8.5 0L10 1.6L5 6.5Z" fill="#2f2f2f"/></svg>
<svg class="i" style="left:29px;top:752px;" width="17" height="15" viewBox="0 0 17 15"><path d="M0.5 3.5H5l1.5-2H11V13.5H0.5Z" fill="#f6d48a" stroke="#c9973a"/><path d="M0.5 13.5L3 7H15.5L12.5 13.5Z" fill="#fbe3a2" stroke="#c9973a"/></svg>
<div class="t" style="left:49px;top:751.64px;font-size:17.3px;color:#000;font-weight:bold;letter-spacing:0.054px;">Components</div>
<svg class="i" style="left:33px;top:784.0px;" width="7" height="9" viewBox="0 0 7 9"><path d="M0 1.5L1.6 0L6.2 4.5L1.6 9L0 7.5L3 4.5Z" fill="#8f8f8f"/></svg>
<svg class="i" style="left:47px;top:780px;" width="17" height="15" viewBox="0 0 17 15"><path d="M0.5 3.5H5l1.5-2H11V13.5H0.5Z" fill="#f6d48a" stroke="#c9973a"/><path d="M0.5 13.5L3 7H15.5L12.5 13.5Z" fill="#fbe3a2" stroke="#c9973a"/></svg>
<div class="t" style="left:68px;top:779.64px;font-size:17.3px;color:#000;font-weight:bold;letter-spacing:0.017px;">Referenced_Components</div>
<svg class="i" style="left:33px;top:812.0px;" width="7" height="9" viewBox="0 0 7 9"><path d="M0 1.5L1.6 0L6.2 4.5L1.6 9L0 7.5L3 4.5Z" fill="#8f8f8f"/></svg>
<svg class="i" style="left:47px;top:808px;" width="16" height="16" viewBox="0 0 16 16"><circle cx="8" cy="8" r="7.5" fill="#3aa0d8" stroke="#2a78b0"/><path d="M5.5 2.5v5h3M10.5 2.5v11M5.5 9.5v4" stroke="#111" stroke-width="1.6"/><path d="M7.5 4h2" stroke="#fff" stroke-width="1.5"/><path d="M1 11.5l2.5 2.8L8 9" fill="none" stroke="#3d9a4a" stroke-width="1.6"/></svg>
<div class="t" style="left:68px;top:807.64px;font-size:17.3px;color:#000;font-weight:bold;letter-spacing:-0.086px;">pin_mux:PinSettings</div>
<svg class="i" style="left:33px;top:840.0px;" width="7" height="9" viewBox="0 0 7 9"><path d="M0 1.5L1.6 0L6.2 4.5L1.6 9L0 7.5L3 4.5Z" fill="#8f8f8f"/></svg>
<svg class="i" style="left:47px;top:836px;" width="16" height="16" viewBox="0 0 16 16"><rect x="0.5" y="0.5" width="15" height="15" rx="1.5" fill="#ea9a72" stroke="#b8643c"/><circle cx="8" cy="8" r="5.3" fill="#fff" stroke="#111" stroke-width="1.4"/><path d="M8 4.5V8L10 10" stroke="#111" stroke-width="1.2" fill="none"/><path d="M1 11.5l2.5 2.8L8 9" fill="none" stroke="#3d9a4a" stroke-width="1.6"/></svg>
<div class="t" style="left:68px;top:835.64px;font-size:17.3px;color:#000;font-weight:bold;letter-spacing:0.091px;">clockMan1:clock_manager</div>
<svg class="i" style="left:33px;top:868.0px;" width="7" height="9" viewBox="0 0 7 9"><path d="M0 1.5L1.6 0L6.2 4.5L1.6 9L0 7.5L3 4.5Z" fill="#8f8f8f"/></svg>
<svg class="i" style="left:47px;top:864px;" width="16" height="16" viewBox="0 0 16 16"><rect x="0.5" y="0.5" width="15" height="15" rx="1.5" fill="#ea9a72" stroke="#b8643c"/><path d="M2 8.5h5v-4h6M9 12.5h-2v-4" fill="none" stroke="#111" stroke-width="1.8"/><path d="M3 5.5l2-2" stroke="#fff" stroke-width="1.2"/><path d="M1 11.5l2.5 2.8L8 9" fill="none" stroke="#3d9a4a" stroke-width="1.6"/></svg>
<div class="t" style="left:68px;top:863.64px;font-size:17.3px;color:#000;font-weight:bold;letter-spacing:0.339px;">intMan1:interrupt_manager</div>
<svg class="i" style="left:33px;top:896.0px;" width="7" height="9" viewBox="0 0 7 9"><path d="M0 1.5L1.6 0L6.2 4.5L1.6 9L0 7.5L3 4.5Z" fill="#8f8f8f"/></svg>
<svg class="i" style="left:47px;top:892px;" width="16" height="16" viewBox="0 0 16 16"><rect x="0.5" y="0.5" width="15" height="15" rx="1.5" fill="#ea9a72" stroke="#b8643c"/><path d="M2.5 6.5C4 3 12 3 13.5 6.5L11.5 8L10 6.5H6L4.5 8Z" fill="#fff" stroke="#111" stroke-width="1.1"/><rect x="4" y="8.5" width="8" height="4.5" fill="#fff" stroke="#111" stroke-width="1.1"/><circle cx="8" cy="10.7" r="1.2" fill="#111"/><path d="M1 11.5l2.5 2.8L8 9" fill="none" stroke="#3d9a4a" stroke-width="1.6"/></svg>
<div class="t" style="left:68px;top:891.64px;font-size:17.3px;color:#000;font-weight:bold;letter-spacing:0.493px;">lpuart1:lpuart</div>
<svg class="i" style="left:33px;top:924.0px;" width="7" height="9" viewBox="0 0 7 9"><path d="M0 1.5L1.6 0L6.2 4.5L1.6 9L0 7.5L3 4.5Z" fill="#8f8f8f"/></svg>
<svg class="i" style="left:47px;top:920px;" width="16" height="16" viewBox="0 0 16 16"><rect x="0.5" y="0.5" width="15" height="15" rx="1.5" fill="#ea9a72" stroke="#b8643c"/><path d="M2.5 6.5C4 3 12 3 13.5 6.5L11.5 8L10 6.5H6L4.5 8Z" fill="#fff" stroke="#111" stroke-width="1.1"/><rect x="4" y="8.5" width="8" height="4.5" fill="#fff" stroke="#111" stroke-width="1.1"/><circle cx="8" cy="10.7" r="1.2" fill="#111"/><path d="M1 11.5l2.5 2.8L8 9" fill="none" stroke="#3d9a4a" stroke-width="1.6"/></svg>
<div class="t" style="left:68px;top:919.64px;font-size:17.3px;color:#000;font-weight:bold;letter-spacing:-0.309px;">i2c1:i2c_pal</div>
<div style="position:absolute;left:479px;top:108px;width:900px;height:659px;background:#fff;border:1px solid #c3cbdc;box-sizing:border-box;border-radius:6px 6px 4px 4px"></div>
<div style="position:absolute;left:480px;top:109px;width:898px;height:33px;background:linear-gradient(#dde6f3,#c9dbf0);border-radius:5px 5px 0 0"></div>
<div style="position:absolute;left:580px;top:141px;width:798px;height:1px;background:#adbacc"></div>
<div style="position:absolute;left:480px;top:109px;width:100px;height:33px;background:linear-gradient(#f6f9fd,#ffffff);border-radius:5px 6px 0 0;box-shadow:1px 0 0 #b9c5d6"></div>
<svg class="i" style="left:487px;top:119px;" width="12" height="15" viewBox="0 0 12 15"><path d="M0.5 0.5H7.5L11.5 4.5V14.5H0.5Z" fill="#f4f8fc" stroke="#7f8a98"/><text x="6.6" y="12.5" font-size="9.5" font-weight="bold" text-anchor="middle" fill="#1f5a8f" font-family="Liberation Sans">c</text><rect x="1.8" y="10.8" width="1.6" height="1.6" fill="#1f5a8f"/></svg>
<div class="t" style="left:504.4px;top:118.74px;font-size:17.3px;color:#222;letter-spacing:0.209px;">main.c</div>
<svg class="i" style="left:562px;top:121px;" width="11" height="11" viewBox="0 0 11 11"><path d="M2.2 0.5L5.5 3.8L8.8 0.5L10.5 2.2L7.2 5.5L10.5 8.8L8.8 10.5L5.5 7.2L2.2 10.5L0.5 8.8L3.8 5.5L0.5 2.2Z" fill="#fff" stroke="#3c3c3c" stroke-width="1"/></svg>
<svg class="i" style="left:586px;top:116px;" width="18" height="19" viewBox="0 0 18 19"><g transform="rotate(-45 9 9.5)"><rect x="5" y="0" width="8" height="19" fill="#fff" stroke="#111" stroke-width="1.6"/><path d="M6.5 2.5v14" stroke="#111" stroke-width="1"/><path d="M2.5 3h2.5M2.5 6h2.5M2.5 9h2.5M2.5 12h2.5M2.5 15h2.5M13 3h2.5M13 6h2.5M13 9h2.5M13 12h2.5M13 15h2.5" stroke="#3a3a10" stroke-width="1.3"/><path d="M14 2v15" stroke="#d8d860" stroke-width="1"/></g></svg>
<div class="t" style="left:608px;top:118.74px;font-size:17.3px;color:#222;letter-spacing:0.422px;">Component Inspector - pin_mux</div>
<svg class="i" style="left:1330px;top:116px;" width="11" height="5" viewBox="0 0 11 5"><rect x="0.5" y="0.5" width="10" height="4" fill="#fff" stroke="#555"/></svg>
<svg class="i" style="left:1353px;top:116px;" width="11" height="11" viewBox="0 0 11 11"><rect x="0.5" y="0.5" width="10" height="10" fill="#fff" stroke="#555"/><path d="M0.5 2.5h10" stroke="#555"/></svg>
<div style="position:absolute;left:480px;top:142px;width:14px;height:624px;background:#f8f8f8"></div>
<div style="position:absolute;left:1363px;top:142px;width:15px;height:624px;background:#f8f8f8"></div>
<div style="position:absolute;left:514px;top:312px;width:824px;height:24px;background:#e8f2fe"></div>
<div style="position:absolute;left:514px;top:624px;width:824px;height:72px;background:#dcdcdc"></div>
<svg class="i" style="left:501px;top:151px;" width="11" height="11" viewBox="0 0 11 11"><circle cx="5.5" cy="5.5" r="4.7" fill="#eef2f8" stroke="#7a8aa0"/><path d="M3 5.5h5M5.5 3v5" stroke="#2a3f5f" stroke-width="1.1"/></svg>
<svg class="i" style="left:501px;top:487px;" width="11" height="11" viewBox="0 0 11 11"><circle cx="5.5" cy="5.5" r="4.7" fill="#eef2f8" stroke="#9aa8ba"/><path d="M3 5.5h5" stroke="#5a6f8f" stroke-width="1.1"/></svg>
<div class="t" style="left:520px;top:147.25px;font-size:18px;color:#000;letter-spacing:-0.952px;"><span style="color:#4a7f68;font-weight:normal;">* Æ·ÖÇ¿Æ¼¼S32K144¿ª·ç°å</span></div>
<div style="position:absolute;left:746px;top:149px;width:11px;height:16px;border:1px solid #888;box-sizing:border-box;background:#fff"></div>
<div class="t" style="left:514.2px;top:171.25px;font-size:18px;color:#000;letter-spacing:-0.389px;"><span style="color:#7f0055;font-weight:bold;">#include</span></div>
<div class="t" style="left:590.7px;top:171.25px;font-size:18px;color:#000;letter-spacing:0.448px;"><span style="color:#2a00ff;font-weight:normal;">"Cpu.h"</span></div>
<div class="t" style="left:514.2px;top:195.25px;font-size:18px;color:#000;letter-spacing:-0.389px;"><span style="color:#7f0055;font-weight:bold;">#include</span></div>
<div class="t" style="left:590.7px;top:195.25px;font-size:18px;color:#000;letter-spacing:0.777px;"><span style="color:#2a00ff;font-weight:normal;">"delay.h"</span></div>
<div class="t" style="left:514.2px;top:219.25px;font-size:18px;color:#000;letter-spacing:-0.389px;"><span style="color:#7f0055;font-weight:bold;">#include</span></div>
<div class="t" style="left:590.7px;top:219.25px;font-size:18px;color:#000;letter-spacing:0.999px;"><span style="color:#2a00ff;font-weight:normal;">"uart.h"</span></div>
<div class="t" style="left:514.2px;top:243.25px;font-size:18px;color:#000;letter-spacing:-0.389px;"><span style="color:#7f0055;font-weight:bold;">#include</span></div>
<div class="t" style="left:584.5px;top:243.25px;font-size:18px;color:#000;letter-spacing:0.739px;"><span style="color:#2a00ff;font-weight:normal;">"key.h"</span></div>
<div class="t" style="left:514.2px;top:267.25px;font-size:18px;color:#000;letter-spacing:-0.389px;"><span style="color:#7f0055;font-weight:bold;">#include</span></div>
<div class="t" style="left:584.5px;top:267.25px;font-size:18px;color:#000;letter-spacing:0.997px;"><span style="color:#2a00ff;font-weight:normal;">"oled.h"</span></div>
<div class="t" style="left:524.6px;top:291.25px;font-size:18px;color:#000;letter-spacing:-0.204px;"><span style="color:#7f0055;font-weight:bold;">volatile</span></div>
<div class="t" style="left:591.2px;top:291.25px;font-size:18px;color:#000;letter-spacing:0.105px;"><span style="color:#7f0055;font-weight:bold;">int</span></div>
<div class="t" style="left:619.4px;top:291.25px;font-size:18px;color:#000;letter-spacing:0.202px;"><span style="font-weight:normal;">exit_code = 0;</span></div>
<div class="t" style="left:514px;top:339.25px;font-size:18px;color:#000;letter-spacing:-0.170px;"><span style="color:#7f0055;font-weight:bold;">#define</span></div>
<div class="t" style="left:582.8px;top:339.25px;font-size:18px;color:#000;letter-spacing:-1.136px;">LED1(x)</div>
<div class="t" style="left:654px;top:339.25px;font-size:18px;color:#000;letter-spacing:-0.300px;">PINS_DRV_WritePin(PTD,16,!x);</div>
<div class="t" style="left:514px;top:363.25px;font-size:18px;color:#000;letter-spacing:-0.170px;"><span style="color:#7f0055;font-weight:bold;">#define</span></div>
<div class="t" style="left:582.8px;top:363.25px;font-size:18px;color:#000;letter-spacing:-1.136px;">LED2(x)</div>
<div class="t" style="left:654px;top:363.25px;font-size:18px;color:#000;letter-spacing:-0.300px;">PINS_DRV_WritePin(PTD,15,!x);</div>
<div class="t" style="left:514px;top:387.25px;font-size:18px;color:#000;letter-spacing:-0.170px;"><span style="color:#7f0055;font-weight:bold;">#define</span></div>
<div class="t" style="left:582.8px;top:387.25px;font-size:18px;color:#000;letter-spacing:-1.136px;">LED3(x)</div>
<div class="t" style="left:654px;top:387.25px;font-size:18px;color:#000;letter-spacing:-0.311px;">PINS_DRV_WritePin(PTD,1,!x);</div>
<div class="t" style="left:514px;top:411.25px;font-size:18px;color:#000;letter-spacing:-0.170px;"><span style="color:#7f0055;font-weight:bold;">#define</span></div>
<div class="t" style="left:582.8px;top:411.25px;font-size:18px;color:#000;letter-spacing:-1.136px;">LED4(x)</div>
<div class="t" style="left:654px;top:411.25px;font-size:18px;color:#000;letter-spacing:-0.311px;">PINS_DRV_WritePin(PTD,0,!x);</div>
<div class="t" style="left:515px;top:483.25px;font-size:18px;color:#000;letter-spacing:-0.095px;"><span style="color:#7f0055;font-weight:bold;">int</span></div>
<div class="t" style="left:542.7px;top:483.25px;font-size:18px;color:#000;letter-spacing:-0.437px;"><span style="color:#000;font-weight:bold;">main</span></div>
<div class="t" style="left:585.2px;top:483.25px;font-size:18px;color:#000;"><span style="font-weight:normal;">(</span></div>
<div class="t" style="left:590px;top:483.25px;font-size:18px;color:#000;letter-spacing:-0.567px;"><span style="color:#7f0055;font-weight:bold;">void</span></div>
<div class="t" style="left:626.5px;top:483.25px;font-size:18px;color:#000;"><span style="font-weight:normal;">)</span></div>
<div class="t" style="left:515px;top:507.25px;font-size:18px;color:#000;">{</div>
<div class="t" style="left:523.5px;top:531.25px;font-size:18px;color:#000;letter-spacing:0.786px;"><span style="color:#4a7f68;font-weight:normal;">/* Write your local variable definition here */</span></div>
<div class="t" style="left:535px;top:555.25px;font-size:18px;color:#000;letter-spacing:1.026px;"><span style="color:#005032;font-weight:normal;">uint8_t</span></div>
<div class="t" style="left:601px;top:555.25px;font-size:18px;color:#000;letter-spacing:0.569px;"><span style="font-weight:normal;">pinstate;</span></div>
<div class="t" style="left:535px;top:579.25px;font-size:18px;color:#000;letter-spacing:-0.045px;"><span style="color:#7f0055;font-weight:bold;">int</span></div>
<div class="t" style="left:562.8px;top:579.25px;font-size:18px;color:#000;letter-spacing:-0.202px;"><span style="font-weight:normal;">MCU_Freq;</span></div>
<div class="t" style="left:523.5px;top:603.25px;font-size:18px;color:#000;letter-spacing:0.382px;"><span style="color:#4a7f68;font-weight:normal;">/*** Processor Expert internal initialization. DON'T REMOVE THIS CODE!!! ***/</span></div>
<div class="t" style="left:524.2px;top:627.25px;font-size:18px;color:#000;letter-spacing:-0.061px;"><span style="color:#7f0055;font-weight:bold;">#ifdef</span></div>
<div class="t" style="left:577.9px;top:627.25px;font-size:18px;color:#000;letter-spacing:-1.349px;">PEX_RTOS_INIT</div>
<div class="t" style="left:535.2px;top:651.25px;font-size:18px;color:#000;letter-spacing:-1.118px;">PEX_RTOS_INIT();</div>
<div class="t" style="left:771px;top:651.25px;font-size:18px;color:#000;letter-spacing:0.262px;"><span style="color:#4a7f68;font-weight:normal;">/* Initialization of the selected RTOS. Macro is defined by the RTOS c</span></div>
<div class="t" style="left:524.2px;top:675.25px;font-size:18px;color:#000;letter-spacing:-0.081px;"><span style="color:#7f0055;font-weight:bold;">#endif</span></div>
<div class="t" style="left:523.5px;top:699.25px;font-size:18px;color:#000;letter-spacing:0.592px;"><span style="color:#4a7f68;font-weight:normal;">/*** End of Processor Expert internal initialization.</span></div>
<div class="t" style="left:1050px;top:699.25px;font-size:18px;color:#000;letter-spacing:3.328px;"><span style="color:#4a7f68;font-weight:normal;">***/</span></div>
<div style="position:absolute;left:1338px;top:144px;width:25px;height:594px;background:#f0f0f0"></div>
<div style="position:absolute;left:1338px;top:144px;width:25px;height:594px;background:#f0f0f0"></div>
<div style="position:absolute;left:1338px;top:170px;width:25px;height:141px;background:#cdcdcd"></div>
<svg class="i" style="left:1344.5px;top:154px;" width="12" height="9" viewBox="0 0 12 9"><path d="M0 6.5L6 0.5L12 6.5L10 8.5L6 4.5L2 8.5Z" fill="#4a4a4a"/></svg>
<svg class="i" style="left:1344.5px;top:721px;" width="12" height="9" viewBox="0 0 12 9"><path d="M0 2.5L6 8.5L12 2.5L10 0.5L6 4.5L2 0.5Z" fill="#4a4a4a"/></svg>
<div style="position:absolute;left:512px;top:738px;width:826px;height:26px;background:#f0f0f0"></div>
<div style="position:absolute;left:538px;top:738px;width:672px;height:26px;background:#cdcdcd"></div>
<svg class="i" style="left:519px;top:745px;" width="9" height="12" viewBox="0 0 9 12"><path d="M7.5 0L1.5 6L7.5 12L9 10.2L5 6L9 1.8Z" fill="#505050"/></svg>
<svg class="i" style="left:1319px;top:745px;" width="9" height="12" viewBox="0 0 9 12"><path d="M1.5 0L7.5 6L1.5 12L0 10.2L4 6L0 1.8Z" fill="#505050"/></svg>
<div style="position:absolute;left:1338px;top:738px;width:25px;height:26px;background:#f0f0f0"></div>
<div style="position:absolute;left:1383px;top:108px;width:511px;height:658px;background:#fff;border:1px solid #d5dbe9;box-sizing:border-box;border-radius:6px"></div>
<div style="position:absolute;left:1384px;top:109px;width:509px;height:33px;background:#f4f5fa;border-radius:5px 5px 0 0"></div>
<svg class="i" style="left:1846px;top:116px;" width="11" height="5" viewBox="0 0 11 5"><rect x="0.5" y="0.5" width="10" height="4" fill="#fff" stroke="#555"/></svg>
<svg class="i" style="left:1869px;top:116px;" width="11" height="11" viewBox="0 0 11 11"><rect x="0.5" y="0.5" width="10" height="10" fill="#fff" stroke="#555"/><path d="M0.5 2.5h10" stroke="#555"/></svg>
<svg class="i" style="left:1896px;top:110px;" width="20" height="3" viewBox="0 0 20 3"><rect x="1" y="0.5" width="2" height="2" fill="#9aa0aa"/><rect x="6" y="0.5" width="2" height="2" fill="#9aa0aa"/><rect x="11" y="0.5" width="2" height="2" fill="#9aa0aa"/><rect x="16" y="0.5" width="2" height="2" fill="#9aa0aa"/></svg>
<svg class="i" style="left:1904px;top:119px;" width="10" height="9" viewBox="0 0 10 9"><rect x="0.5" y="3.5" width="6" height="5" fill="#fff" stroke="#444"/><path d="M2.5 3.5V0.5H9.5V5.5H6.5" fill="none" stroke="#444"/></svg>
<svg class="i" style="left:1901px;top:139px;" width="14" height="15" viewBox="0 0 14 15"><rect x="0.5" y="0.5" width="5" height="5" fill="#cfe6fb" stroke="#2a4f7a"/><rect x="0.5" y="9.5" width="5" height="5" fill="#cfe6fb" stroke="#2a4f7a"/><path d="M7 3h7M11 7.5h3M7 12h7" stroke="#2a4f7a"/><rect x="7.5" y="6.5" width="2" height="2" fill="none" stroke="#2a4f7a" stroke-width=".8"/></svg>
<svg class="i" style="left:1902px;top:161px;" width="14" height="14" viewBox="0 0 14 14"><circle cx="7" cy="7" r="6.3" fill="#eaf6ea" stroke="#2e6a36" stroke-width="1"/><circle cx="7" cy="7" r="4" fill="none" stroke="#3a9a4a" stroke-width="1"/><circle cx="7" cy="7" r="2" fill="#1e4a26"/></svg>
<div style="position:absolute;left:479px;top:770px;width:1415px;height:221px;background:#fff;border:1px solid #d5dbe9;box-sizing:border-box;border-radius:6px"></div>
<div style="position:absolute;left:480px;top:771px;width:1413px;height:33px;background:#f4f5fa;border-radius:5px 5px 0 0"></div>
<div style="position:absolute;left:750px;top:771px;width:129px;height:33px;background:linear-gradient(#dde5f1,#ffffff);border-radius:6px 6px 0 0"></div>
<svg class="i" style="left:483px;top:781px;" width="16" height="17" viewBox="0 0 16 17"><rect x="0.5" y="0.5" width="12" height="15" fill="#f6eeee" stroke="#c9b0b0"/><circle cx="6" cy="5" r="2.5" fill="#e07070"/><rect x="4" y="9" width="4" height="5" fill="#f0b070"/></svg>
<div class="t" style="left:504px;top:781.74px;font-size:17.3px;color:#9a9a9a;letter-spacing:0.704px;">Problems</div>
<svg class="i" style="left:588px;top:781px;" width="16" height="16" viewBox="0 0 16 16"><rect x="3.5" y="0.5" width="11" height="13" fill="#eef3fa" stroke="#9aa8ba"/><path d="M1 9l3 3 5-6" fill="none" stroke="#6a9ad0" stroke-width="1.5"/><path d="M6 4h6M6 7h6" stroke="#9aa8ba"/></svg>
<div class="t" style="left:608px;top:781.74px;font-size:17.3px;color:#9a9a9a;letter-spacing:-1.055px;">Tasks</div>
<svg class="i" style="left:660px;top:782px;" width="13" height="14" viewBox="0 0 13 14"><rect x="0.5" y="0.5" width="11" height="9" fill="#eef3fa" stroke="#6a8ab0"/><path d="M3 3.5h6M3 6h4" stroke="#6a8ab0"/><rect x="2" y="11" width="8" height="2" fill="#6a8ab0"/></svg>
<div class="t" style="left:677.7px;top:781.74px;font-size:17.3px;color:#6a6a6a;font-weight:bold;letter-spacing:-0.374px;">Console</div>
<svg class="i" style="left:754px;top:781px;" width="15" height="14" viewBox="0 0 15 14"><rect x="0.5" y="0.5" width="14" height="13" fill="#fff" stroke="#4a5a72"/><path d="M0.5 3.5h14M4.5 3.5v10" stroke="#4a5a72"/></svg>
<div class="t" style="left:774px;top:781.74px;font-size:17.3px;color:#222;letter-spacing:0.017px;">Properties</div>
<svg class="i" style="left:861px;top:784px;" width="11" height="11" viewBox="0 0 11 11"><path d="M2.2 0.5L5.5 3.8L8.8 0.5L10.5 2.2L7.2 5.5L10.5 8.8L8.8 10.5L5.5 7.2L2.2 10.5L0.5 8.8L3.8 5.5L0.5 2.2Z" fill="#fff" stroke="#3c3c3c" stroke-width="1"/></svg>
<div style="position:absolute;left:1722px;top:773px;width:23px;height:20px;background:#c9def7;border:1px solid #a9c8ef;box-sizing:border-box"></div>
<svg class="i" style="left:1727px;top:777px;" width="13" height="12" viewBox="0 0 13 12"><path d="M1.5 1v10M1.5 4h3M1.5 7.5h3M1.5 10.5h3" stroke="#4a5a72"/><rect x="4.5" y="3" width="2" height="2" fill="none" stroke="#4a5a72" stroke-width=".8"/><path d="M4 1h8M7 4.5h5M7 8h5" stroke="#4a5a72"/></svg>
<svg class="i" style="left:1748px;top:776px;" width="16" height="15" viewBox="0 0 16 15"><path d="M0 2.5h5M0 11.5h5M6 0v5M6 9v6" stroke="#4a5a72" stroke-width="1.2"/><path d="M4 1l2 1.5L4 4M4 10l2 1.5L4 13" fill="#4a5a72"/><path d="M5 6h6V4l4 3.5-4 3.5V9H5z" fill="#fbe6a0" stroke="#d9a53a" stroke-width=".9"/></svg>
<svg class="i" style="left:1772px;top:776px;" width="15" height="15" viewBox="0 0 15 15"><rect x="0.5" y="1.5" width="13" height="12" fill="#fafafa" stroke="#aaa"/><path d="M0.5 4h13" stroke="#aaa"/><circle cx="10" cy="11" r="3" fill="none" stroke="#bbb"/></svg>
<svg class="i" style="left:1794px;top:775px;" width="16" height="17" viewBox="0 0 16 17"><rect x="0.5" y="4.5" width="13" height="12" fill="#fff" stroke="#555"/><rect x="1" y="5" width="12" height="3" fill="#5b9bd5"/><path d="M9 9l5-6" stroke="#2e7d3a" stroke-width="2"/><circle cx="14" cy="3" r="2.5" fill="#2e7d3a"/></svg>
<svg class="i" style="left:1826px;top:779px;" width="11" height="6" viewBox="0 0 11 6"><path d="M0.5 0.5H10.5L5.5 5.5Z" fill="#fff" stroke="#555"/></svg>
<svg class="i" style="left:1846px;top:779px;" width="11" height="5" viewBox="0 0 11 5"><rect x="0.5" y="0.5" width="10" height="4" fill="#fff" stroke="#555"/></svg>
<svg class="i" style="left:1869px;top:779px;" width="11" height="11" viewBox="0 0 11 11"><rect x="0.5" y="0.5" width="10" height="10" fill="#fff" stroke="#555"/><path d="M0.5 2.5h10" stroke="#555"/></svg>
<div class="t" style="left:488px;top:814.74px;font-size:17.3px;color:#111;letter-spacing:0.231px;">Property</div>
<div class="t" style="left:1051px;top:814.74px;font-size:17.3px;color:#111;letter-spacing:-0.241px;">Value</div>
<svg class="i" style="left:1398px;top:903px;" width="125" height="60" viewBox="0 0 125 60"><g fill="none" stroke="#a9a9a9" stroke-width="4.4"><path d="M13 6L6 21"/><path d="M8 14.5H31"/><path d="M20 12V31"/><path d="M5 31H31"/><path d="M19 33C16 44 11 51 5 55"/><path d="M24 37C26 42 29 48 30 54"/><path d="M37.5 11V41"/><path d="M36 12.5H57"/><path d="M56 11V50"/><path d="M41 48.5H57"/><path d="M67 10.5C80 9.5 100 8 116 5.5"/><path d="M77 17L83 25"/><path d="M113 17L102 26"/><path d="M66 32.5H119"/><path d="M93 10V49C93 53 90 54 82 53"/></g></svg>
<div class="t" style="left:1542px;top:897.06px;font-size:61.5px;color:#a9a9a9;transform:scaleX(0.7528);transform-origin:0 0;">@</div>
<div class="t" style="left:1596px;top:897.06px;font-size:61.5px;color:#a9a9a9;transform:scaleX(0.9076);transform-origin:0 0;">Jayden</div>
<div class="t" style="left:1795.6px;top:897.06px;font-size:61.5px;color:#a9a9a9;transform:scaleX(0.8129);transform-origin:0 0;">Yin</div>
<div style="position:absolute;left:1044px;top:810px;width:1px;height:180px;background:#e3e3e3"></div>
<div style="position:absolute;left:1886px;top:810px;width:1px;height:180px;background:#e3e3e3"></div>
<div style="position:absolute;left:481px;top:865px;width:1405px;height:1px;background:#e3e3e3"></div>
<div style="position:absolute;left:481px;top:893px;width:1405px;height:1px;background:#e3e3e3"></div>
<div style="position:absolute;left:481px;top:921px;width:1405px;height:1px;background:#e3e3e3"></div>
<div style="position:absolute;left:481px;top:949px;width:1405px;height:1px;background:#e3e3e3"></div>
<div style="position:absolute;left:481px;top:977px;width:1405px;height:1px;background:#e3e3e3"></div>
<div style="position:absolute;left:1021px;top:995px;width:1px;height:22px;background:#a0a6b4"></div>
<div style="position:absolute;left:1185px;top:995px;width:1px;height:22px;background:#a0a6b4"></div>
<div style="position:absolute;left:1339px;top:995px;width:1px;height:22px;background:#a0a6b4"></div>
<div class="t" style="left:1029px;top:997.24px;font-size:17.3px;color:#222;letter-spacing:0.409px;">Writable</div>
<div class="t" style="left:1193px;top:997.24px;font-size:17.3px;color:#222;letter-spacing:0.162px;">Smart Insert</div>
<div class="t" style="left:1347px;top:997.24px;font-size:17.3px;color:#222;letter-spacing:-0.057px;">21 : 1</div>
<svg class="i" style="left:1490px;top:997px;" width="3" height="19" viewBox="0 0 3 19"><rect x="0.5" y="0.0" width="2" height="2" fill="#9aa0aa"/><rect x="0.5" y="4.5" width="2" height="2" fill="#9aa0aa"/><rect x="0.5" y="9.0" width="2" height="2" fill="#9aa0aa"/><rect x="0.5" y="13.5" width="2" height="2" fill="#9aa0aa"/></svg>
</body></html>
